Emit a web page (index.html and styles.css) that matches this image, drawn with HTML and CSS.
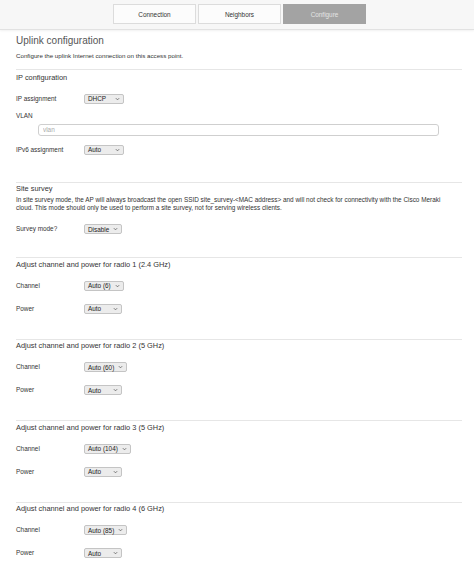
FILE: index.html
```html
<!DOCTYPE html>
<html lang="en">
<head>
    <meta charset="UTF-8">
    <meta name="viewport" content="width=device-width, initial-scale=1.0">
    <title>Uplink configuration</title>
    <link rel="stylesheet" href="styles.css">
</head>
<body>
    <header class="topbar">
        <nav class="tabs">
            <a class="tab" href="#">Connection</a>
            <a class="tab" href="#">Neighbors</a>
            <a class="tab active" href="#">Configure</a>
        </nav>
    </header>

    <main class="page">
        <h1 class="page-title">Uplink configuration</h1>
        <p class="page-desc">Configure the uplink Internet connection on this access point.</p>

        <!-- IP configuration -->
        <section class="section section-ip">
            <h2 class="section-title">IP configuration</h2>
            <div class="field">
                <label class="field-label">IP assignment</label>
                <div class="select select-wide"><span>DHCP</span><svg class="chev" viewBox="0 0 6 4"><path d="M1 1 L3 3 L5 1"/></svg></div>
            </div>
            <div class="field-label vlan-label">VLAN</div>
            <input class="text-input" type="text" placeholder="vlan">
            <div class="field field-ipv6">
                <label class="field-label">IPv6 assignment</label>
                <div class="select select-wide"><span>Auto</span><svg class="chev" viewBox="0 0 6 4"><path d="M1 1 L3 3 L5 1"/></svg></div>
            </div>
        </section>

        <!-- Site survey -->
        <section class="section section-survey">
            <h2 class="section-title">Site survey</h2>
            <p class="section-desc">In site survey mode, the AP will always broadcast the open SSID site_survey-&lt;MAC address&gt; and will not check for connectivity with the Cisco Meraki cloud. This mode should only be used to perform a site survey, not for serving wireless clients.</p>
            <div class="field field-survey">
                <label class="field-label">Survey mode?</label>
                <div class="select"><span>Disable</span><svg class="chev" viewBox="0 0 6 4"><path d="M1 1 L3 3 L5 1"/></svg></div>
            </div>
        </section>

        <!-- Radios -->
        <section class="section section-radio">
            <h2 class="section-title">Adjust channel and power for radio 1 (2.4 GHz)</h2>
            <div class="field">
                <label class="field-label">Channel</label>
                <div class="select"><span>Auto (6)</span><svg class="chev" viewBox="0 0 6 4"><path d="M1 1 L3 3 L5 1"/></svg></div>
            </div>
            <div class="field field-power">
                <label class="field-label">Power</label>
                <div class="select"><span>Auto</span><svg class="chev" viewBox="0 0 6 4"><path d="M1 1 L3 3 L5 1"/></svg></div>
            </div>
        </section>

        <section class="section section-radio">
            <h2 class="section-title">Adjust channel and power for radio 2 (5 GHz)</h2>
            <div class="field">
                <label class="field-label">Channel</label>
                <div class="select"><span>Auto (60)</span><svg class="chev" viewBox="0 0 6 4"><path d="M1 1 L3 3 L5 1"/></svg></div>
            </div>
            <div class="field field-power">
                <label class="field-label">Power</label>
                <div class="select"><span>Auto</span><svg class="chev" viewBox="0 0 6 4"><path d="M1 1 L3 3 L5 1"/></svg></div>
            </div>
        </section>

        <section class="section section-radio">
            <h2 class="section-title">Adjust channel and power for radio 3 (5 GHz)</h2>
            <div class="field">
                <label class="field-label">Channel</label>
                <div class="select"><span>Auto (104)</span><svg class="chev" viewBox="0 0 6 4"><path d="M1 1 L3 3 L5 1"/></svg></div>
            </div>
            <div class="field field-power">
                <label class="field-label">Power</label>
                <div class="select"><span>Auto</span><svg class="chev" viewBox="0 0 6 4"><path d="M1 1 L3 3 L5 1"/></svg></div>
            </div>
        </section>

        <section class="section section-radio">
            <h2 class="section-title">Adjust channel and power for radio 4 (6 GHz)</h2>
            <div class="field">
                <label class="field-label">Channel</label>
                <div class="select"><span>Auto (85)</span><svg class="chev" viewBox="0 0 6 4"><path d="M1 1 L3 3 L5 1"/></svg></div>
            </div>
            <div class="field field-power">
                <label class="field-label">Power</label>
                <div class="select"><span>Auto</span><svg class="chev" viewBox="0 0 6 4"><path d="M1 1 L3 3 L5 1"/></svg></div>
            </div>
        </section>
    </main>
</body>
</html>
```

FILE: styles.css
```css
body {
    font-family: "Liberation Sans", Arial, sans-serif;
    margin: 0;
    padding: 0;
    background-color: #fff;
    color: #333;
    font-size: 6.4px;
}

/* top navigation */
.topbar {
    height: 30px;
    box-sizing: border-box;
    background-color: #f7f7f7;
    border-bottom: 1px solid #e2e2e2;
    box-shadow: 0 1px 2px rgba(0, 0, 0, 0.06);
}

.tabs {
    display: flex;
    justify-content: center;
    gap: 2px;
    padding-top: 4px;
    padding-left: 5px;
}

.tab {
    display: flex;
    align-items: center;
    justify-content: center;
    width: 83px;
    height: 20px;
    box-sizing: border-box;
    background-color: #fcfcfc;
    border: 1px solid #dcdcdc;
    color: #333;
    text-decoration: none;
    font-size: 6.4px;
}

.tab.active {
    background-color: #a3a3a3;
    border-color: #a3a3a3;
    color: #e4e4e4;
}

/* page */
.page {
    padding: 0 12px 0 16px;
}

.page-title {
    margin: 5px 0 0;
    font-size: 10px;
    line-height: 12px;
    font-weight: normal;
    color: #555;
}

.page-desc {
    margin: 5px 0 0;
    font-size: 6.2px;
    line-height: 8px;
}

.section {
    border-top: 1px solid #e6e6e6;
    padding-top: 1.5px;
}

.section-ip {
    margin-top: 9px;
    padding-top: 3px;
    padding-bottom: 27px;
}

.section-survey {
    padding-bottom: 23px;
}

.section-radio {
    padding-bottom: 25px;
}

.section-title {
    margin: 0;
    font-size: 7.4px;
    line-height: 9px;
    font-weight: normal;
    color: #333;
}

.section-desc {
    max-width: 440px;
    margin: 3px 0 0;
    font-size: 6.4px;
    line-height: 8px;
}

.field {
    display: flex;
    align-items: center;
    height: 10px;
    margin-top: 12px;
}

.section-ip .field {
    margin-top: 11.5px;
}

.section-ip .field-ipv6 {
    margin-top: 9px;
}

.field-power {
    margin-top: 13px;
}

.field-label {
    display: block;
    width: 68px;
    flex-shrink: 0;
    line-height: 8px;
}

.vlan-label {
    margin-top: 8px;
}

.select {
    display: flex;
    align-items: center;
    justify-content: space-between;
    min-width: 38px;
    height: 10px;
    box-sizing: border-box;
    padding: 0 3px 0 3px;
    gap: 4px;
    background-color: #ececec;
    border: 1px solid #c4c4c4;
    border-radius: 2px;
    color: #222;
    font-size: 6.4px;
}

.select-wide {
    width: 40px;
}

.chev {
    width: 5px;
    height: 4px;
    fill: none;
    stroke: #555;
    stroke-width: 0.9;
}

.text-input {
    display: block;
    width: 401px;
    height: 12px;
    margin: 4px 0 0 22px;
    padding: 0 4px;
    box-sizing: border-box;
    border: 1px solid #cfcfcf;
    border-radius: 3px;
    font-family: "Liberation Sans", Arial, sans-serif;
    font-size: 6.4px;
    color: #333;
    outline: none;
}

.text-input::placeholder {
    color: #aaa;
}
```
